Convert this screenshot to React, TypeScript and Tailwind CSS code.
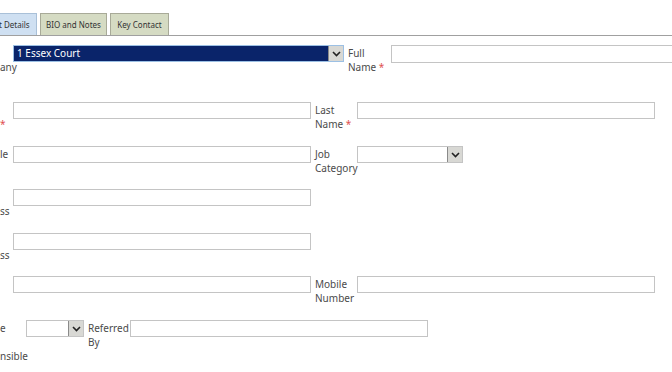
import React from "react";

const font = { fontFamily: '"Noto Sans", "Open Sans", sans-serif' };

function Chevron() {
  return (
    <svg width="9" height="6" viewBox="0 0 9 6">
      <path d="M1 1 L4.5 4.5 L8 1" fill="none" stroke="#222" strokeWidth="1.6" />
    </svg>
  );
}

function DropBtn() {
  return (
    <div className="w-[15px] h-full flex items-center justify-center bg-[#d8d8d4] border-l border-[#8a8a8a] shrink-0">
      <Chevron />
    </div>
  );
}

function Input({ w }: { w: string }) {
  return <div className={`${w} h-[17px] border border-[#c4c4c4] bg-white shrink-0`} />;
}

function Label({ lines, w }: { lines: React.ReactNode[]; w: string }) {
  return (
    <div className={`${w} shrink-0 text-[10px] leading-[14px] text-[#4a4a4a] pt-[1px]`}>
      {lines.map((l, i) => (
        <div key={i} className="whitespace-nowrap h-[14px]">{l}</div>
      ))}
    </div>
  );
}

const Req = () => <span className="text-[#e05050]"> *</span>;

export default function App() {
  return (
    <div className="w-[672px] h-[372px] overflow-hidden bg-white" style={font}>
      <div className="pt-[13px] border-b border-[#a0a0a0] flex items-end gap-[3px] h-[36px]">
        <div className="w-[37px] h-[22px] bg-[#cfe0f2] border border-[#a9c0d8] border-l-0 border-b-0 flex items-center overflow-hidden">
          <span className="text-[8px] text-[#333] whitespace-nowrap -ml-[1px]">t Details</span>
        </div>
        <div className="w-[67px] h-[22px] bg-[#d5dbc3] border border-[#a8aa98] border-b-0 flex items-center justify-center">
          <span className="text-[8px] text-[#333] whitespace-nowrap">BIO and Notes</span>
        </div>
        <div className="w-[59px] h-[22px] bg-[#d5dbc3] border border-[#a8aa98] border-b-0 flex items-center justify-center">
          <span className="text-[8px] text-[#333] whitespace-nowrap">Key Contact</span>
        </div>
      </div>

      {/* Row 1 */}
      <div className="flex items-start mt-[9px] h-[57px]">
        <Label w="w-[13px]" lines={["\u00a0", "any"]} />
        <div className="w-[331px] h-[17px] border border-[#9cc0e4] flex shrink-0">
          <div className="flex-1 bg-[#0a246a] text-white text-[10px] leading-[15px] pl-[3px]">1 Essex Court</div>
          <DropBtn />
        </div>
        <div className="w-[4px] shrink-0" />
        <Label w="w-[43px]" lines={["Full", <>Name<Req /></>]} />
        <div className="w-[300px] h-[18px] border border-[#c4c4c4] shrink-0" />
      </div>

      {/* Row 2 */}
      <div className="flex items-start h-[44px]">
        <Label w="w-[13px]" lines={["\u00a0", <span className="text-[#e05050]">*</span>]} />
        <Input w="w-[298px]" />
        <div className="w-[4px] shrink-0" />
        <Label w="w-[42px]" lines={["Last", <>Name<Req /></>]} />
        <Input w="w-[298px]" />
      </div>

      {/* Row 3 */}
      <div className="flex items-start h-[43px]">
        <Label w="w-[13px]" lines={["le"]} />
        <Input w="w-[298px]" />
        <div className="w-[4px] shrink-0" />
        <Label w="w-[42px]" lines={["Job", "Category"]} />
        <div className="w-[106px] h-[17px] border border-[#c4c4c4] flex shrink-0">
          <div className="flex-1" />
          <DropBtn />
        </div>
      </div>

      {/* Row 4 */}
      <div className="flex items-start h-[44px]">
        <Label w="w-[13px]" lines={["\u00a0", "ss"]} />
        <Input w="w-[298px]" />
      </div>

      {/* Row 5 */}
      <div className="flex items-start h-[43px]">
        <Label w="w-[13px]" lines={["\u00a0", "ss"]} />
        <Input w="w-[298px]" />
      </div>

      {/* Row 6 */}
      <div className="flex items-start h-[44px]">
        <Label w="w-[13px]" lines={["\u00a0"]} />
        <Input w="w-[298px]" />
        <div className="w-[4px] shrink-0" />
        <Label w="w-[42px]" lines={["Mobile", "Number"]} />
        <Input w="w-[298px]" />
      </div>

      {/* Row 7 */}
      <div className="flex items-start">
        <Label w="w-[26px]" lines={["e", "\u00a0", "nsible"]} />
        <div className="w-[58px] h-[17px] border border-[#c4c4c4] flex shrink-0">
          <div className="flex-1" />
          <DropBtn />
        </div>
        <div className="w-[4px] shrink-0" />
        <Label w="w-[42px]" lines={["Referred", "By"]} />
        <Input w="w-[298px]" />
      </div>
    </div>
  );
}
